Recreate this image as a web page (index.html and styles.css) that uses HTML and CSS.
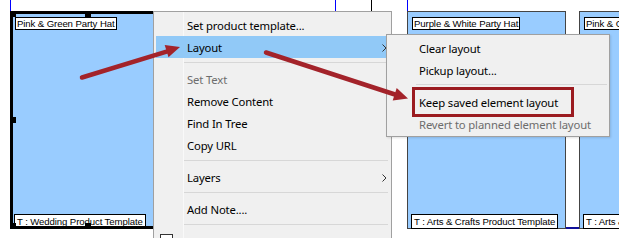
FILE: index.html
```html
<!DOCTYPE html>
<html>
<head>
<meta charset="utf-8">
<link rel="stylesheet" href="styles.css">
</head>
<body>
<div class="screen">
  <div class="cards">
    <div class="card selected">
      <span class="tag tag-top">Pink &amp; Green Party Hat</span>
      <span class="tag tag-bottom">T : Wedding Product Template</span>
      <span class="handle h-tl"></span>
      <span class="handle h-tm"></span>
      <span class="handle h-tr"></span>
      <span class="handle h-ml"></span>
      <span class="handle h-mr"></span>
      <span class="handle h-bl"></span>
      <span class="handle h-bm"></span>
      <span class="handle h-br"></span>
    </div>
    <div class="card card-far">
      <span class="tag tag-top">Purple &amp; White Party Hat</span>
      <span class="tag tag-bottom">T : Arts &amp; Crafts Product Template</span>
    </div>
    <div class="card">
      <span class="tag tag-top">Pink &amp; Green Party Hat</span>
      <span class="tag tag-bottom">T : Arts &amp; Crafts Product Template</span>
    </div>
  </div>

  <span class="guide g1"></span>
  <span class="guide g2"></span>
  <span class="guide g3 black"></span>
  <span class="guide g4"></span>
  <span class="guide-h"></span>

  <div class="menu menu-main">
    <div class="item">Set product template...</div>
    <div class="item active">Layout<svg class="chev" width="5" height="8" viewBox="0 0 5 8"><path d="M0.5 0.5 L4 4 L0.5 7.5" fill="none" stroke="#333" stroke-width="1"/></svg></div>
    <div class="sep"></div>
    <div class="item disabled">Set Text</div>
    <div class="item">Remove Content</div>
    <div class="item">Find In Tree</div>
    <div class="item">Copy URL</div>
    <div class="sep"></div>
    <div class="item">Layers<svg class="chev" width="5" height="8" viewBox="0 0 5 8"><path d="M0.5 0.5 L4 4 L0.5 7.5" fill="none" stroke="#333" stroke-width="1"/></svg></div>
    <div class="sep"></div>
    <div class="item">Add Note....</div>
    <div class="sep"></div>
    <div class="item"><span class="check"></span>Delete Row</div>
  </div>

  <div class="menu menu-sub">
    <div class="item">Clear layout</div>
    <div class="item">Pickup layout...</div>
    <div class="sep"></div>
    <div class="item">Keep saved element layout</div>
    <div class="item disabled">Revert to planned element layout</div>
  </div>

  <div class="callout"></div>

  <svg class="arrows" width="619" height="238" viewBox="0 0 619 238">
    <line x1="82" y1="77.5" x2="169" y2="50.8" stroke="#a3232a" stroke-width="4.5" stroke-linecap="round"/>
    <polygon points="180,47 164.7,44.9 168.5,57.3" fill="#a3232a"/>
    <line x1="266" y1="52.5" x2="395" y2="94.5" stroke="#a3232a" stroke-width="4.5" stroke-linecap="round"/>
    <polygon points="408,98.5 396.7,88 392.7,100.4" fill="#a3232a"/>
  </svg>
</div>
</body>
</html>
```

FILE: styles.css
```css
* { box-sizing: border-box; }
html, body { margin: 0; padding: 0; }
body { background: #fff; font-family: "Noto Sans", "Liberation Sans", sans-serif; }

.screen {
  position: relative;
  width: 619px;
  height: 238px;
  overflow: hidden;
  background: #fff;
}

/* canvas cards */
.cards {
  display: flex;
  gap: 13px;
  padding: 11px 0 0 10px;
}
.card {
  flex: none;
  position: relative;
  width: 159px;
  height: 218px;
  border: 1px solid #444;
  background: #99ccff;
  display: flex;
  flex-direction: column;
  justify-content: space-between;
  align-items: flex-start;
  padding: 5px 0 0 4px;
}
.card-far { margin-left: 225px; }
.card.selected::before {
  content: "";
  position: absolute;
  inset: -1px;
  border: 3px solid #000;
  z-index: 2;
}
.tag {
  font-family: "Liberation Sans", Arial, sans-serif;
  font-size: 9.6px;
  letter-spacing: -0.1px;
  color: #000;
  background: #fff;
  border: 1px solid #000;
  white-space: nowrap;
  padding: 0 1px;
}
.tag-top { line-height: 11px; }
.tag-bottom {
  line-height: 13px;
  margin-left: -1px;
  margin-bottom: -1px;
  padding: 0 2px;
}
.handle {
  position: absolute;
  width: 6px;
  height: 6px;
  background: #000;
  z-index: 3;
}
.h-tl { left: -1px; top: -1px; }
.h-tm { left: 74px; top: -1px; }
.h-tr { right: -1px; top: -1px; }
.h-ml { left: -1px; top: 105px; }
.h-mr { right: -1px; top: 105px; }
.h-bl { left: -1px; bottom: -1px; }
.h-bm { left: 74px; bottom: -1px; }
.h-br { right: -1px; bottom: -1px; }

/* guide lines above the cards */
.guide {
  position: absolute;
  top: 0;
  width: 1px;
  height: 11px;
  background: #0000ff;
}
.guide.black { background: #000; }
.g1 { left: 10px; }
.g2 { left: 335px; }
.g3 { left: 371px; }
.g4 { left: 407px; }
.guide-h {
  position: absolute;
  left: 566px;
  top: 227px;
  width: 13px;
  height: 2px;
  background: #10109a;
}

/* context menus */
.menu {
  position: absolute;
  background: #f0f0f0;
  border: 1px solid #a0a0a0;
  padding: 2px;
  font-size: 11.3px;
  letter-spacing: -0.15px;
  color: #000;
  z-index: 5;
}
.menu-main {
  left: 153px;
  top: 11px;
  width: 239px;
  height: 250px;
}
.menu-main::before {
  content: "";
  position: absolute;
  left: 29px;
  top: 0;
  bottom: 0;
  width: 1px;
  background: #f9f9f9;
}
.menu-sub {
  left: 386px;
  top: 34px;
  width: 224px;
  padding-bottom: 1px;
  z-index: 6;
  box-shadow: 1px 1px 2px rgba(0, 0, 0, 0.12);
}
.item {
  position: relative;
  height: 22px;
  line-height: 21px;
  padding-top: 1px;
  padding-left: 31px;
  white-space: nowrap;
}
.menu-sub .item { padding-left: 30px; }
.item.active { background: #91c9f7; }
.item.disabled { color: #6d6d6d; }
.chev {
  position: absolute;
  right: 2px;
  top: 8px;
}
.sep {
  height: 1px;
  background: #d7d7d7;
  margin: 4px 1px 5px 28px;
}
.menu-sub .sep { margin: 3px 0 6px 27px; }
.check {
  position: absolute;
  left: 4px;
  top: 4px;
  width: 13px;
  height: 13px;
  border: 1px solid #333;
  background: #fff;
}

/* annotations */
.callout {
  position: absolute;
  left: 412px;
  top: 87px;
  width: 162px;
  height: 30px;
  border: 3px solid #9b1b20;
  z-index: 8;
}
.arrows {
  position: absolute;
  left: 0;
  top: 0;
  z-index: 9;
  pointer-events: none;
}
```
